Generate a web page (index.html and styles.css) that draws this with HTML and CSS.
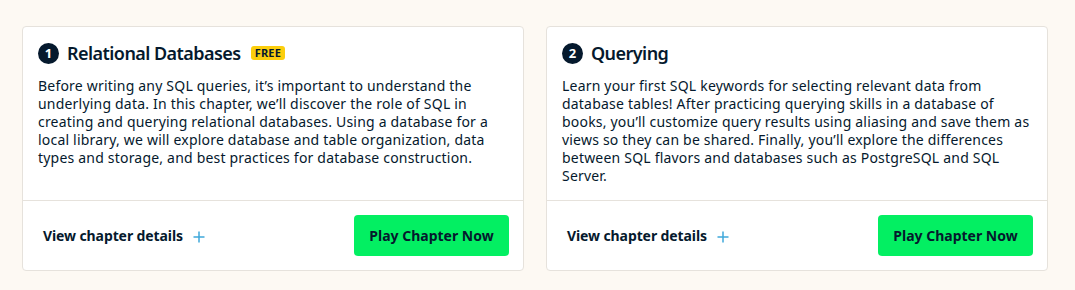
FILE: index.html
```html
<!DOCTYPE html>
<html lang="en">
<head>
<meta charset="utf-8">
<title>Chapters</title>
<link rel="stylesheet" href="styles.css">
</head>
<body>
<div class="chapters">
  <article class="card">
    <div class="card-body">
      <h3 class="title"><span class="num">1</span><span class="title-text">Relational Databases</span><span class="badge">FREE</span></h3>
      <p class="desc">Before writing any SQL queries, it’s important to understand the underlying data. In this chapter, we’ll discover the role of SQL in creating and querying relational databases. Using a database for a local library, we will explore database and table organization, data types and storage, and best practices for database construction.</p>
    </div>
    <div class="card-foot">
      <a class="details">View chapter details <svg class="plus" width="12" height="12" viewBox="0 0 12 12"><path d="M6 0.5V11.5M0.5 6H11.5" stroke="#3fa8da" stroke-width="1.5" fill="none"/></svg></a>
      <a class="play">Play Chapter Now</a>
    </div>
  </article>
  <article class="card">
    <div class="card-body">
      <h3 class="title"><span class="num">2</span><span class="title-text">Querying</span></h3>
      <p class="desc">Learn your first SQL keywords for selecting relevant data from database tables! After practicing querying skills in a database of books, you’ll customize query results using aliasing and save them as views so they can be shared. Finally, you’ll explore the differences between SQL flavors and databases such as PostgreSQL and SQL Server.</p>
    </div>
    <div class="card-foot">
      <a class="details">View chapter details <svg class="plus" width="12" height="12" viewBox="0 0 12 12"><path d="M6 0.5V11.5M0.5 6H11.5" stroke="#3fa8da" stroke-width="1.5" fill="none"/></svg></a>
      <a class="play">Play Chapter Now</a>
    </div>
  </article>
</div>
</body>
</html>
```
FILE: styles.css
```css
html, body {
  margin: 0;
  padding: 0;
  background: #fdf9f3;
}
body {
  font-family: "Noto Sans", "Liberation Sans", sans-serif;
  color: #05192d;
}
.chapters {
  display: grid;
  grid-template-columns: 502px 502px;
  column-gap: 22px;
  padding: 26px 22px;
  align-items: stretch;
}
.card {
  background: #ffffff;
  border: 1px solid #e6e2dc;
  border-radius: 4px;
  display: flex;
  flex-direction: column;
  height: 245px;
  box-sizing: border-box;
}
.card-body {
  padding: 14px 13px 0 15px;
  flex: 1;
}
.title {
  margin: 0 0 12px 0;
  display: flex;
  align-items: center;
  height: 24px;
  font-size: 18px;
  font-weight: 600;
  letter-spacing: -0.55px;
}
.num {
  width: 21px;
  height: 21px;
  border-radius: 50%;
  background: #05192d;
  color: #fff;
  font-size: 13px;
  font-weight: 700;
  display: flex;
  align-items: center;
  justify-content: center;
  margin-right: 8px;
  letter-spacing: 0;
}
.badge {
  margin-left: 10px;
  background: #fcce0d;
  color: #05192d;
  font-size: 11px;
  font-weight: 700;
  line-height: 14px;
  padding: 0 4px;
  border-radius: 3px;
  letter-spacing: 0.2px;
}
.desc {
  margin: 0;
  font-size: 14px;
  line-height: 18px;
  color: #05192d;
  letter-spacing: 0.2px;
}
.card-foot {
  border-top: 1px solid #e6e2dc;
  padding: 14px 14px 14px 20px;
  display: flex;
  align-items: center;
  justify-content: space-between;
}
.details {
  font-size: 14px;
  font-weight: 700;
  display: flex;
  align-items: center;
  gap: 10px;
  letter-spacing: -0.1px;
}
.plus {
  margin-top: 2px;
}
.play {
  width: 155px;
  height: 41px;
  background: #03ef62;
  border-radius: 4px;
  font-size: 14px;
  font-weight: 700;
  display: flex;
  align-items: center;
  justify-content: center;
}
```
